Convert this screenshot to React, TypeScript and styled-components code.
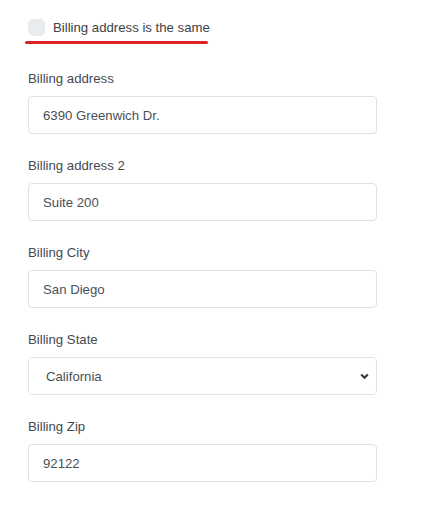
import React from 'react'
import styled, { createGlobalStyle } from 'styled-components'

const GlobalStyle = createGlobalStyle`
  html, body {
    margin: 0;
    padding: 0;
    background: #ffffff;
  }
  body {
    font-family: 'Liberation Sans', Arial, sans-serif;
    color: #495057;
  }
`

const Page = styled.div`
  width: 438px;
  height: 527px;
  box-sizing: border-box;
  padding: 19px 0 0 28px;
`

const SameRow = styled.label`
  display: flex;
  align-items: center;
  gap: 8px;
  height: 17px;
  font-size: 13.2px;
  color: #3d4248;
  cursor: pointer;
`

const CheckBox = styled.span`
  width: 17px;
  height: 17px;
  border-radius: 5px;
  background: #e9ecef;
  flex-shrink: 0;
`

const Underline = styled.div`
  width: 183px;
  height: 3px;
  margin: 5px 0 0 -3px;
  border-radius: 2px;
  background: #dc2127;
`

const Form = styled.div`
  display: flex;
  flex-direction: column;
  gap: 22px;
  width: 349px;
  margin-top: 25px;
`

const Group = styled.div`
  display: flex;
  flex-direction: column;
  gap: 7px;
`

const Label = styled.label`
  font-size: 13.2px;
  line-height: 20px;
  color: #454a50;
`

const Field = styled.div`
  position: relative;
  height: 38px;
  box-sizing: border-box;
  border: 1px solid #dee2e6;
  border-radius: 4px;
  background: #fff;
  display: flex;
  align-items: center;
`

const Input = styled.input`
  border: none;
  outline: none;
  background: transparent;
  width: 100%;
  padding: 0 0 0 14px;
  font-family: 'Liberation Sans', Arial, sans-serif;
  font-size: 13.2px;
  color: #495057;
`

const Select = styled.select`
  appearance: none;
  border: none;
  outline: none;
  background: transparent;
  width: 100%;
  height: 100%;
  padding: 0 0 0 17px;
  font-family: 'Liberation Sans', Arial, sans-serif;
  font-size: 13.2px;
  color: #495057;
`

const Chevron = styled.svg`
  position: absolute;
  right: 7px;
  top: 15px;
  pointer-events: none;
`

const fields = [
  { label: 'Billing address', value: '6390 Greenwich Dr.' },
  { label: 'Billing address 2', value: 'Suite 200' },
  { label: 'Billing City', value: 'San Diego' },
]

export default function App() {
  return (
    <>
      <GlobalStyle />
      <Page>
        <SameRow>
          <CheckBox />
          Billing address is the same
        </SameRow>
        <Underline />
        <Form>
          {fields.map((f) => (
            <Group key={f.label}>
              <Label>{f.label}</Label>
              <Field>
                <Input defaultValue={f.value} />
              </Field>
            </Group>
          ))}
          <Group>
            <Label>Billing State</Label>
            <Field>
              <Select defaultValue="CA">
                <option value="CA">California</option>
              </Select>
              <Chevron width="9" height="7" viewBox="0 0 9 7">
                <path d="M1.2 1.5 L4.5 4.8 L7.8 1.5" fill="none" stroke="#343a40" strokeWidth="2.2" />
              </Chevron>
            </Field>
          </Group>
          <Group>
            <Label>Billing Zip</Label>
            <Field>
              <Input defaultValue="92122" />
            </Field>
          </Group>
        </Form>
      </Page>
    </>
  )
}
